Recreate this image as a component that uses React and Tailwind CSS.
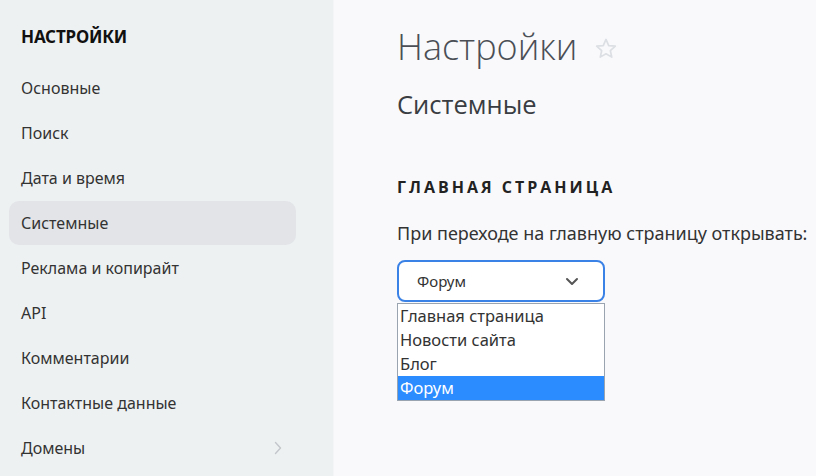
import React from 'react';

const menu = [
  'Основные',
  'Поиск',
  'Дата и время',
  'Системные',
  'Реклама и копирайт',
  'API',
  'Комментарии',
  'Контактные данные',
  'Домены',
];

const options = ['Главная страница', 'Новости сайта', 'Блог', 'Форум'];

const App = () => {
  const active = 'Системные';
  const selected = 'Форум';

  return (
    <div className="flex w-[816px] h-[476px] overflow-hidden bg-[#f9f9fb]" style={{ fontFamily: '"Noto Sans", "Open Sans", sans-serif' }}>
      {/* Sidebar */}
      <aside className="w-[334px] shrink-0 bg-[#eef1f2] border-r border-[#f3f5f6] pl-[9px] pr-[37px] pt-[25px]">
        <div className="px-[12px] h-[24px] flex items-center text-[17px] font-bold text-[#111] mb-[17px] tracking-[-0.2px]">
          НАСТРОЙКИ
        </div>
        <nav className="flex flex-col gap-[1px]">
          {menu.map((item) => (
            <div
              key={item}
              className={`h-[44px] px-[12px] flex items-center justify-between rounded-[10px] text-[16px] text-[#333] ${
                item === active ? 'bg-[#e2e4e7]' : ''
              }`}
            >
              <span>{item}</span>
              {item === 'Домены' && (
                <svg width="8" height="14" viewBox="0 0 8 14" className="mr-[2px]">
                  <path d="M1.5 1.5 L6.5 7 L1.5 12.5" fill="none" stroke="#c3c7cc" strokeWidth="1.4" strokeLinecap="round" strokeLinejoin="round" />
                </svg>
              )}
            </div>
          ))}
        </nav>
      </aside>

      {/* Main */}
      <main className="flex-1 pl-[63px] pt-[22px]">
        <div className="flex items-center gap-[16px] h-[50px]">
          <h1 className="text-[36px] font-light text-[#4b4f55] leading-none" style={{ fontFamily: '"Open Sans", sans-serif' }}>
            Настройки
          </h1>
          <svg width="26" height="26" viewBox="0 0 24 24" className="mt-[4px]">
            <path
              d="M12 3.2l2.5 5.6 6.1.6-4.6 4.1 1.3 6-5.3-3.1-5.3 3.1 1.3-6-4.6-4.1 6.1-.6z"
              fill="none"
              stroke="#dcdfe3"
              strokeWidth="1.6"
              strokeLinejoin="round"
            />
          </svg>
        </div>
        <h2 className="mt-[16px] text-[25.5px] text-[#3a3d42] leading-[32px]" style={{ fontFamily: '"Open Sans", sans-serif' }}>
          Системные
        </h2>

        <h3 className="mt-[55px] text-[16px] font-bold tracking-[3px] text-[#222] leading-[24px]" style={{ fontFamily: '"Open Sans", sans-serif' }}>
          ГЛАВНАЯ СТРАНИЦА
        </h3>

        <p className="mt-[22px] text-[18px] text-[#333] leading-[24px] whitespace-nowrap">
          При переходе на главную страницу открывать:
        </p>

        <div className="mt-[15px] w-[208px]">
          <div className="h-[42px] border-2 border-[#3b82e6] rounded-[8px] bg-white flex items-center justify-between pl-[18px] pr-[24px] text-[15px] text-[#333]">
            <span>{selected}</span>
            <svg width="14" height="9" viewBox="0 0 14 9">
              <path d="M2 2 L7 7 L12 2" fill="none" stroke="#555" strokeWidth="2" strokeLinecap="round" strokeLinejoin="round" />
            </svg>
          </div>
          <ul className="mt-[1px] border border-[#9aa4b0] bg-white">
            {options.map((o) => (
              <li
                key={o}
                className={`h-[24px] px-[2px] flex items-center text-[16.5px] leading-none ${
                  o === selected ? 'bg-[#2b8cff] text-white' : 'text-[#333]'
                }`}
              >
                {o}
              </li>
            ))}
          </ul>
        </div>
      </main>
    </div>
  );
};

export default App;
